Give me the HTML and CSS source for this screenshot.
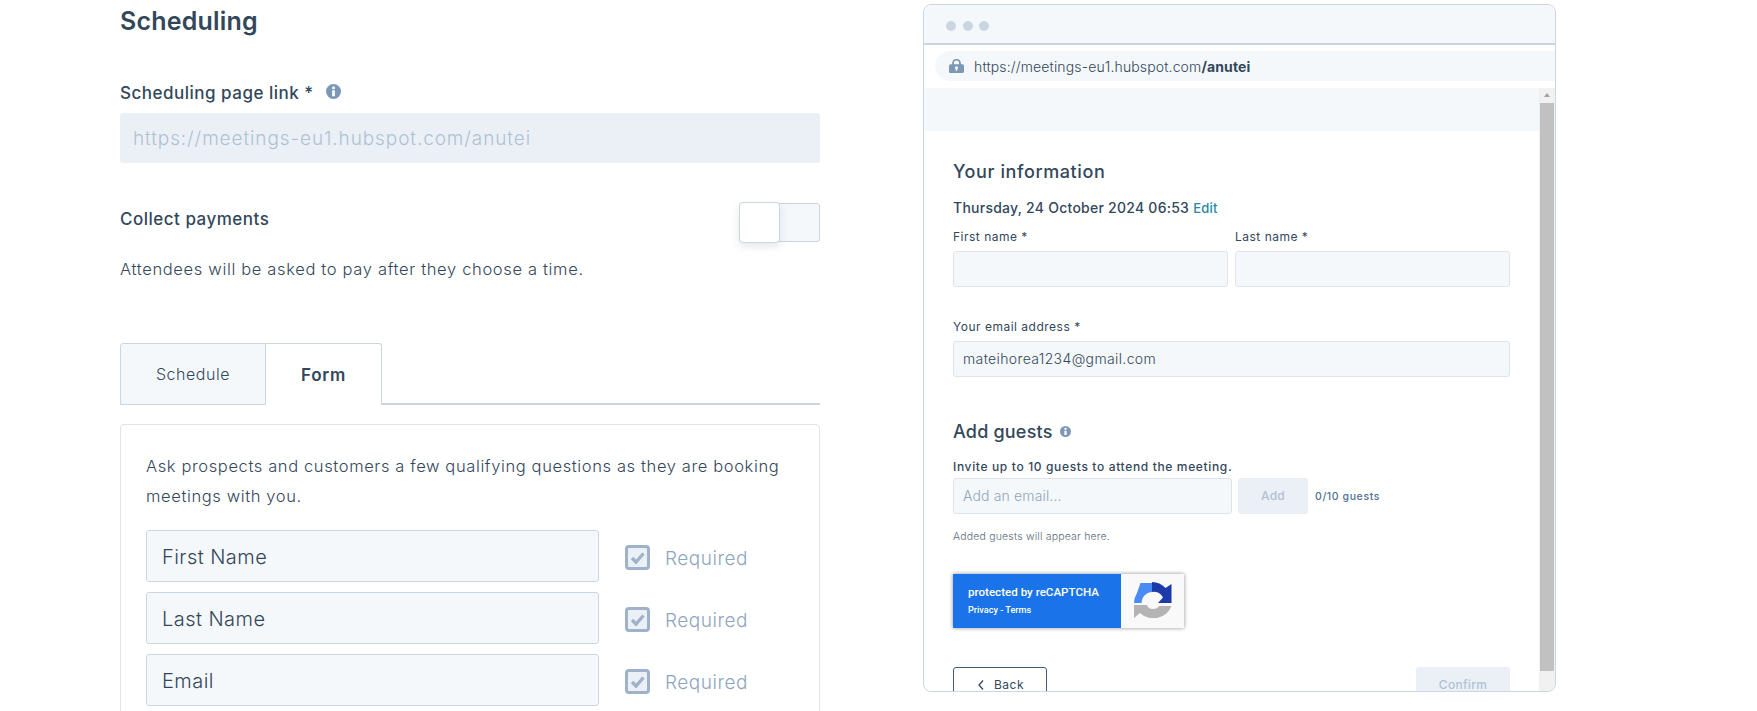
FILE: index.html
```html
<!DOCTYPE html>
<html lang="en">
<head>
<meta charset="utf-8">
<title>Scheduling</title>
<link rel="stylesheet" href="styles.css">
</head>
<body>
<div class="page">
  <section class="settings">
    <h1 class="title">Scheduling</h1>
    <div class="link-label">
      <span>Scheduling page link *</span>
      <svg class="info-lg" viewBox="0 0 14 14"><circle cx="7" cy="7" r="7" fill="#7c98b6"/><circle cx="7" cy="3.6" r="1.4" fill="#fff"/><rect x="5.7" y="5.9" width="2.6" height="5.6" rx=".5" fill="#fff"/></svg>
    </div>
    <div class="link-input">https://meetings-eu1.hubspot.com/anutei</div>
    <div class="pay-row">
      <span class="pay-label">Collect payments</span>
      <div class="toggle"><div class="thumb"></div></div>
    </div>
    <p class="pay-desc">Attendees will be asked to pay after they choose a time.</p>
    <div class="tabs">
      <div class="tab tab-off">Schedule</div>
      <div class="tab tab-on">Form</div>
      <div class="tab-fill"></div>
    </div>
    <div class="card">
      <p class="card-text">Ask prospects and customers a few qualifying questions as they are booking meetings with you.</p>
      <div class="rows">
        <div class="row">
          <div class="field">First Name</div>
          <div class="check"><svg viewBox="0 0 19 19"><path d="M4 10l4 4 7.500-8.500" fill="none" stroke="#9fb2c9" stroke-width="3.400"/></svg></div>
          <span class="req">Required</span>
        </div>
        <div class="row">
          <div class="field">Last Name</div>
          <div class="check"><svg viewBox="0 0 19 19"><path d="M4 10l4 4 7.500-8.500" fill="none" stroke="#9fb2c9" stroke-width="3.400"/></svg></div>
          <span class="req">Required</span>
        </div>
        <div class="row">
          <div class="field">Email</div>
          <div class="check"><svg viewBox="0 0 19 19"><path d="M4 10l4 4 7.500-8.500" fill="none" stroke="#9fb2c9" stroke-width="3.400"/></svg></div>
          <span class="req">Required</span>
        </div>
      </div>
    </div>
  </section>

  <section class="browser">
    <div class="chrome">
      <i class="dot"></i><i class="dot"></i><i class="dot"></i>
    </div>
    <div class="address">
      <div class="pill">
        <svg class="lock" viewBox="0 0 15 14"><path d="M4 6V4.200a3.500 3.500 0 0 1 7 0V6" fill="none" stroke="#7c98b6" stroke-width="1.800"/><rect y="5.200" width="15" height="8.800" rx="1.600" fill="#7c98b6"/><circle cx="7.500" cy="8.800" r="1.500" fill="#fff"/><rect x="6.800" y="9" width="1.400" height="2.800" fill="#fff"/></svg>
        <span class="url">https://meetings-eu1.hubspot.com<b>/anutei</b></span>
      </div>
    </div>
    <div class="view">
      <div class="main">
        <div class="band"></div>
        <div class="content">
          <h2 class="h-info">Your information</h2>
          <div class="date">Thursday, 24 October 2024 06:53 <a class="edit">Edit</a></div>
          <div class="names">
            <div class="col">
              <div class="lbl">First name *</div>
              <div class="inp"></div>
            </div>
            <div class="col">
              <div class="lbl">Last name *</div>
              <div class="inp"></div>
            </div>
          </div>
          <div class="lbl lbl-email">Your email address *</div>
          <div class="inp inp-text">mateihorea1234@gmail.com</div>
          <h2 class="h-guests">Add guests
            <svg class="info-sm" viewBox="0 0 14 14"><circle cx="7" cy="7" r="7" fill="#7c98b6"/><circle cx="7" cy="3.600" r="1.500" fill="#fff"/><rect x="5.600" y="5.900" width="2.800" height="5.600" rx=".5" fill="#fff"/></svg>
          </h2>
          <div class="invite">Invite up to 10 guests to attend the meeting.</div>
          <div class="guest-row">
            <div class="inp guest-inp">Add an email...</div>
            <div class="add-btn">Add</div>
            <span class="count">0/10 guests</span>
          </div>
          <div class="added">Added guests will appear here.</div>
          <div class="captcha">
            <div class="cap-blue">
              <div class="cap-1">protected by reCAPTCHA</div>
              <div class="cap-2">Privacy - Terms</div>
            </div>
            <div class="cap-logo">
              <svg viewBox="0 0 38 37">
                <path fill="#b4b4b4" d="M0 24H13C13.500 26.500 16 28 19 28S24 27 25 25H37.500A19 18 0 0 1 6 32L0 37Z"/>
                <path fill="#4a8af4" d="M0 22A19 19 0 0 1 3 12L6.500 2H18V11C13 11 8 15 7.500 22Z"/>
                <path fill="#1c3aa9" d="M18 1A19 19 0 0 1 31.500 7L37.500 3V22H24L29 16.500A10 10 0 0 0 18 11Z"/>
              </svg>
            </div>
          </div>
          <div class="actions">
            <div class="back">
              <svg class="chev" viewBox="0 0 8 12"><path d="M6 1.500L2 6l4 4.500" fill="none" stroke="#33475b" stroke-width="1.300"/></svg>
              <span>Back</span>
            </div>
            <div class="confirm">Confirm</div>
          </div>
        </div>
      </div>
      <div class="scrollbar">
        <div class="arrow"></div>
        <div class="sb-thumb"></div>
      </div>
    </div>
  </section>
</div>
</body>
</html>
```

FILE: styles.css
```css
* { box-sizing: border-box; }
html, body { margin: 0; height: 711px; overflow: hidden; background: #fff; }
body { font-family: Inter, "Open Sans", sans-serif; color: #33475b; }
h1, h2, p { margin: 0; }

.page { display: flex; padding-left: 120px; height: 711px; }
.settings { width: 700px; flex: none; }
.title { font-size: 25px; line-height: 42px; font-weight: 600; letter-spacing: .2px; }
.link-label { display: flex; align-items: flex-start; margin-top: 39px; font-size: 17px; line-height: 25px; font-weight: 500; letter-spacing: .5px; }
.info-lg { width: 15px; height: 15px; margin: 3px 0 0 12px; }
.link-input { margin-top: 7px; height: 50px; background: #eaf0f6; border-radius: 3px; padding-left: 13px; font-size: 19px; line-height: 51px; font-weight: 300; letter-spacing: .9px; color: #b0c1d4; }

.pay-row { display: flex; justify-content: space-between; margin-top: 39px; }
.pay-label { font-size: 17px; line-height: 34px; font-weight: 500; letter-spacing: .5px; }
.toggle { position: relative; width: 81px; height: 39px; margin-top: 1px; background: #f5f8fa; border: 1px solid #cbd6e2; border-radius: 3px; }
.thumb { position: absolute; left: -1px; top: -2px; width: 41px; height: 41px; background: #fff; border: 1px solid #cbd6e2; border-radius: 4px; box-shadow: 0 4px 8px rgba(45, 62, 80, .12); }
.pay-desc { margin-top: 15px; font-size: 16.500px; line-height: 24px; font-weight: 300; letter-spacing: .66px; }

.tabs { display: flex; margin-top: 62px; height: 62px; }
.tab { display: flex; align-items: center; justify-content: center; font-size: 16px; }
.tab-off { width: 146px; background: #f5f8fa; border: 1px solid #cbd6e2; border-radius: 3px 0 0 0; font-weight: 300; letter-spacing: .55px; }
.tab-on { width: 116px; background: #fff; border: 1px solid #cbd6e2; border-width: 1px 1px 0 0; border-radius: 0 3px 0 0; font-size: 17px; font-weight: 600; letter-spacing: .8px; }
.tab-fill { flex: 1; border-bottom: 2px solid #cbd6e2; }

.card { margin-top: 19px; height: 400px; border: 1px solid #dfe3eb; border-radius: 4px; padding: 26px 25px 0; }
.card-text { font-size: 16.500px; line-height: 30px; font-weight: 300; letter-spacing: .62px; }
.rows { display: flex; flex-direction: column; gap: 10px; margin-top: 19px; }
.row { display: flex; align-items: center; }
.field { width: 453px; height: 52px; background: #f5f8fa; border: 1px solid #cbd6e2; border-radius: 3px; padding-left: 15px; font-size: 20px; line-height: 52px; font-weight: 300; letter-spacing: .45px; }
.check { width: 25px; height: 25px; margin: 2px 0 0 26px; background: #eaf0f6; border: 3px solid #9fb2c9; border-radius: 4px; }
.check svg { display: block; width: 19px; height: 19px; }
.req { margin: 4px 0 0 15px; font-size: 19px; font-weight: 300; letter-spacing: .5px; color: #8fa5bd; }

.browser { flex: none; width: 633px; height: 688px; margin: 4px 0 0 103px; display: flex; flex-direction: column; border: 1px solid #cbd6e2; border-radius: 8px; overflow: hidden; }
.chrome { flex: none; height: 40px; display: flex; align-items: center; gap: 6.500px; padding: 4px 0 0 22px; background: #f5f8fa; border-bottom: 2px solid #cbd6e2; }
.dot { width: 10px; height: 10px; border-radius: 50%; background: #cbd6e2; }
.address { flex: none; height: 43px; padding: 6px 0 6px 11px; background: #fff; }
.pill { display: flex; align-items: center; height: 30px; background: #f5f8fa; border-radius: 15px 0 0 15px; padding-left: 14px; }
.lock { width: 15px; height: 14px; }
.url { margin-left: 10px; font-size: 14px; font-weight: 300; letter-spacing: .14px; color: #33475b; }
.url b { font-weight: 700; }

.view { flex: 1; min-height: 0; display: flex; }
.main { flex: 1; min-width: 0; }
.band { height: 43px; background: #f5f8fa; }
.content { padding: 29px 29px 0; }
.h-info { font-size: 18px; line-height: 24px; font-weight: 500; letter-spacing: .6px; }
.date { margin-top: 14px; font-size: 14px; line-height: 20px; font-weight: 500; letter-spacing: .25px; }
.edit { font-size: 13px; color: #2a86a6; }
.names { display: flex; gap: 7px; margin-top: 11px; }
.col { flex: 1; }
.lbl { font-size: 12px; line-height: 16px; font-weight: 400; letter-spacing: .5px; }
.inp { margin-top: 6px; height: 36px; background: #f5f8fa; border: 1px solid #dfe3eb; border-radius: 3px; }
.lbl-email { margin-top: 32px; }
.inp-text { padding-left: 9px; font-size: 14px; line-height: 33px; font-weight: 300; letter-spacing: .37px; }
.h-guests { display: flex; align-items: center; margin-top: 43px; font-size: 18px; line-height: 24px; font-weight: 500; letter-spacing: .2px; }
.info-sm { width: 11px; height: 11px; margin: -2px 0 0 7px; }
.invite { margin-top: 15px; font-size: 12px; line-height: 16px; font-weight: 500; letter-spacing: .65px; }
.guest-row { display: flex; align-items: center; margin-top: 3px; }
.guest-inp { margin: 0; width: 279px; padding-left: 9px; font-size: 14px; line-height: 33px; font-weight: 300; letter-spacing: .15px; color: #8fa5bd; }
.add-btn { margin-left: 6px; width: 70px; height: 36px; background: #eaf0f6; border-radius: 3px; text-align: center; font-size: 12px; line-height: 36px; font-weight: 500; letter-spacing: .3px; color: #b0c1d4; }
.count { margin-left: 7px; font-size: 10.500px; font-weight: 500; letter-spacing: .6px; color: #516f90; }
.added { margin-top: 16px; font-size: 10.500px; line-height: 14px; font-weight: 300; letter-spacing: .19px; color: #5a6b7d; }

.captcha { display: flex; width: 231px; height: 54px; margin-top: 30px; box-shadow: 0 0 4px rgba(0, 0, 0, .45); }
.cap-blue { width: 168px; background: #1a73e8; padding: 10px 0 0 15px; color: #fff; font-family: Roboto, sans-serif; }
.cap-1 { font-size: 11.600px; line-height: 16px; font-weight: 500; }
.cap-2 { margin-top: 4px; font-size: 9.100px; line-height: 12px; font-weight: 500; }
.cap-logo { flex: 1; background: #f9f9f9; padding: 7px 0 0 13px; }
.cap-logo svg { display: block; width: 38px; height: 37px; }

.actions { display: flex; justify-content: space-between; margin-top: 39px; }
.back { display: flex; align-items: center; width: 94px; height: 36px; border: 1px solid #425b76; border-radius: 3px; padding-left: 23px; font-size: 12px; line-height: 12px; letter-spacing: .5px; }
.chev { width: 8px; height: 12px; margin-right: 9px; }
.confirm { width: 94px; height: 36px; background: #eaf0f6; border-radius: 3px; text-align: center; font-size: 12px; line-height: 36px; font-weight: 500; letter-spacing: .3px; color: #b0c1d4; }

.scrollbar { flex: none; width: 16px; background: #f1f1f1; display: flex; flex-direction: column; align-items: center; }
.arrow { width: 0; height: 0; margin: 5px 0 6px; border: 3.500px solid transparent; border-top: 0; border-bottom: 4px solid #a3a3a3; }
.sb-thumb { width: 14px; height: 568px; background: #c1c1c1; margin-left: -1px; }
```
